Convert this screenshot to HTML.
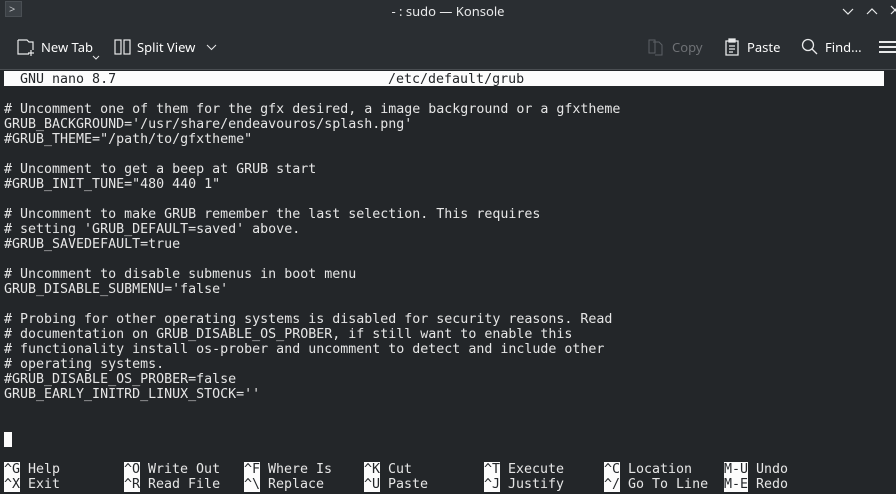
<!DOCTYPE html>
<html><head><meta charset="utf-8"><style>
*{margin:0;padding:0;box-sizing:border-box}
body{width:896px;height:494px;background:#232629;overflow:hidden;position:relative;font-family:"Noto Sans","DejaVu Sans","Liberation Sans",sans-serif;color:#fcfcfc}
.top{position:absolute;left:0;top:0;width:896px;height:70px;background:#2a2e32;border-bottom:1px solid #4a4e52}
.title{position:absolute;top:2px;left:0;width:896px;text-align:center;font-size:13px;color:#e8e9ea}
.tb{position:absolute;top:38px;font-size:13px;color:#fcfcfc}
.dis{color:#6e7175}
.term{position:absolute;left:4px;top:72px;font-family:"DejaVu Sans Mono","Liberation Mono",monospace;font-size:13.3px;line-height:15px;white-space:pre;color:#e6e6e6}
.row{height:15px;position:relative}
.inv{background:#fcfcfc;color:#232629}
.k{background:#fcfcfc;color:#232629}
.c{position:absolute;top:0}
</style></head><body>
<div class="top">
 <div style="position:absolute;left:5px;top:1px;width:17px;height:16px;background:#3b4045;border:1px solid #4a4f54"></div>
 <div style="position:absolute;left:9px;top:2px;font-size:11px;color:#c0c3c6">&gt;</div>
 <div class="title">- : sudo — Konsole</div>
 <svg style="position:absolute;left:840px;top:4px" width="56" height="14" stroke="#e8e9ea" fill="none" stroke-width="1.2"><path d="M3 5l5 5 5-5"/><path d="M27 10l5-5 5 5"/><path d="M51 2l8 8M59 2l-8 8"/></svg>
 <svg style="position:absolute;left:17px;top:38px" width="18" height="18" stroke="#e8e9ea" fill="none" stroke-width="1.2"><path d="M1 2h9l2 2h4v8M1 2v14h11"/><path d="M14 12v6M11 15h6"/></svg>
 <div class="tb" style="left:41px">New Tab</div>
 <svg style="position:absolute;left:92px;top:55px" width="8" height="6" stroke="#e8e9ea" fill="none"><path d="M1 1l3 3 3-3"/></svg>
 <svg style="position:absolute;left:114px;top:39px" width="17" height="16" stroke="#e8e9ea" fill="none" stroke-width="1.2"><rect x="1" y="1" width="6" height="14"/><rect x="10" y="1" width="6" height="14"/></svg>
 <div class="tb" style="left:137px">Split View</div>
 <svg style="position:absolute;left:206px;top:44px" width="11" height="7" stroke="#e8e9ea" fill="none"><path d="M1 1l4.5 4.5L10 1"/></svg>
 <svg style="position:absolute;left:648px;top:38px" width="16" height="18" stroke="#5c6065" fill="none"><path d="M1 2h6v13H1zM5 4h6l3 3v10H7"/></svg>
 <div class="tb dis" style="left:672px">Copy</div>
 <svg style="position:absolute;left:724px;top:38px" width="16" height="18" stroke="#e8e9ea" fill="none" stroke-width="1.3"><path d="M2 3h12v14H2z"/><path d="M5 1h6v3H5z" fill="#e8e9ea"/><path d="M5 8h6M5 11h6M5 14h4"/></svg>
 <div class="tb" style="left:747px">Paste</div>
 <svg style="position:absolute;left:801px;top:38px" width="18" height="18" stroke="#e8e9ea" fill="none" stroke-width="1.3"><circle cx="7" cy="7" r="5.5"/><path d="M11 11l5 5"/></svg>
 <div class="tb" style="left:825px">Find...</div>
 <svg style="position:absolute;left:879px;top:41px" width="17" height="13" fill="#e8e9ea"><rect y="0" width="17" height="2"/><rect y="5" width="17" height="2"/><rect y="10" width="17" height="2"/></svg>
</div>
<div class="inv" style="position:absolute;left:4px;top:71px;width:880px;height:15px"></div>
<div class="term"><div class="row" style="color:#232629">  GNU nano 8.7<span class="c" style="left:384px">/etc/default/grub</span></div><div class="row"></div><div class="row"># Uncomment one of them for the gfx desired, a image background or a gfxtheme</div><div class="row">GRUB_BACKGROUND='/usr/share/endeavouros/splash.png'</div><div class="row">#GRUB_THEME="/path/to/gfxtheme"</div><div class="row"></div><div class="row"># Uncomment to get a beep at GRUB start</div><div class="row">#GRUB_INIT_TUNE="480 440 1"</div><div class="row"></div><div class="row"># Uncomment to make GRUB remember the last selection. This requires</div><div class="row"># setting 'GRUB_DEFAULT=saved' above.</div><div class="row">#GRUB_SAVEDEFAULT=true</div><div class="row"></div><div class="row"># Uncomment to disable submenus in boot menu</div><div class="row">GRUB_DISABLE_SUBMENU='false'</div><div class="row"></div><div class="row"># Probing for other operating systems is disabled for security reasons. Read</div><div class="row"># documentation on GRUB_DISABLE_OS_PROBER, if still want to enable this</div><div class="row"># functionality install os-prober and uncomment to detect and include other</div><div class="row"># operating systems.</div><div class="row">#GRUB_DISABLE_OS_PROBER=false</div><div class="row">GRUB_EARLY_INITRD_LINUX_STOCK=''</div><div class="row"></div><div class="row"></div><div class="row"><span class="k"> </span></div><div class="row"></div><div class="row"><span class="c" style="left:0"><span class="k">^G</span> Help</span><span class="c" style="left:120px"><span class="k">^O</span> Write Out</span><span class="c" style="left:240px"><span class="k">^F</span> Where Is</span><span class="c" style="left:360px"><span class="k">^K</span> Cut</span><span class="c" style="left:480px"><span class="k">^T</span> Execute</span><span class="c" style="left:600px"><span class="k">^C</span> Location</span><span class="c" style="left:720px"><span class="k">M-U</span> Undo</span></div><div class="row"><span class="c" style="left:0"><span class="k">^X</span> Exit</span><span class="c" style="left:120px"><span class="k">^R</span> Read File</span><span class="c" style="left:240px"><span class="k">^\</span> Replace</span><span class="c" style="left:360px"><span class="k">^U</span> Paste</span><span class="c" style="left:480px"><span class="k">^J</span> Justify</span><span class="c" style="left:600px"><span class="k">^/</span> Go To Line</span><span class="c" style="left:720px"><span class="k">M-E</span> Redo</span></div></div>
</body></html>
